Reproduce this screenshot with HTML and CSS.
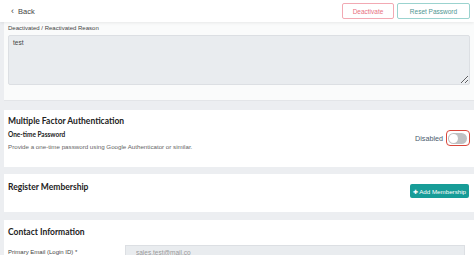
FILE: index.html
```html
<!DOCTYPE html>
<html lang="en">
<head>
  <meta charset="UTF-8">
  <title>Member Detail</title>
  <link rel="stylesheet" href="styles.css">
</head>
<body>

  <div class="topbar">
    <a class="back" href="#"><span class="chev">&#8249;</span> Back</a>
    <div class="actions">
      <button class="btn btn-deactivate">Deactivate</button>
      <button class="btn btn-reset">Reset Password</button>
    </div>
  </div>

  <div class="card card-reason">
    <label class="field-label">Deactivated / Reactivated Reason</label>
    <textarea class="reason" readonly>test</textarea>
  </div>

  <div class="card card-mfa">
    <h2 class="card-title">Multiple Factor Authentication</h2>
    <div class="mfa-row">
      <div>
        <div class="mfa-name">One-time Password</div>
        <div class="mfa-desc">Provide a one-time password using Google Authenticator or similar.</div>
      </div>
      <div class="mfa-status">
        <span class="status-text">Disabled</span>
        <span class="toggle"><span class="knob"></span></span>
      </div>
    </div>
  </div>

  <div class="card card-membership">
    <h2 class="card-title">Register Membership</h2>
    <button class="btn-add"><span class="plus">&#10010;</span> Add Membership</button>
  </div>

  <div class="card card-contact">
    <h2 class="card-title">Contact Information</h2>
    <div class="form-row">
      <label class="field-label">Primary Email (Login ID) *</label>
      <input class="email" type="text" value="sales.test@mail.co" readonly>
    </div>
  </div>

</body>
</html>
```

FILE: styles.css
```css
body {
  margin: 0;
  background: #eceef1;
  font-family: "Liberation Sans", Arial, sans-serif;
  color: #333;
  overflow: hidden;
}
.topbar {
  height: 22px;
  background: #fff;
  display: flex;
  align-items: center;
  justify-content: space-between;
  padding: 0 4px 0 11px;
  box-shadow: 0 1px 3px rgba(0, 0, 0, 0.08);
  position: relative;
}
.back {
  font-size: 7.5px;
  color: #444;
  text-decoration: none;
}
.chev {
  font-size: 9px;
  margin-right: 2px;
}
.actions {
  display: flex;
  gap: 3px;
}
.btn {
  height: 16px;
  font-family: "Liberation Sans", Arial, sans-serif;
  font-size: 6.5px;
  background: #fff;
  border-radius: 2px;
  padding: 0;
}
.btn-deactivate {
  width: 52px;
  border: 1px solid #f2a9b3;
  color: #e8707f;
}
.btn-reset {
  width: 73px;
  border: 1px solid #9bd3cf;
  color: #4f9692;
}
.card {
  background: #fff;
  margin-left: 4px;
  padding: 0 4px;
}
.card-reason {
  background: #fafbfb;
  padding-top: 3px;
  height: 75px;
  border-bottom: 1px solid #e3e5e8;
}
.field-label {
  display: block;
  font-size: 6px;
  color: #444;
}
.reason {
  display: block;
  box-sizing: border-box;
  width: 462px;
  height: 50px;
  margin-top: 4px;
  background: #e9ecef;
  border: 1px solid #dcdfe3;
  border-radius: 2px;
  font-family: "Liberation Sans", Arial, sans-serif;
  font-size: 6.5px;
  color: #444;
  padding: 3px 4px;
  resize: vertical;
}
.card-mfa {
  margin-top: 9px;
  height: 57px;
  padding-top: 6px;
  box-sizing: border-box;
}
.card-title {
  margin: 0;
  font-family: "Lato", sans-serif;
  font-weight: 700;
  font-size: 8.5px;
  color: #222;
}
.mfa-row {
  display: flex;
  justify-content: space-between;
  align-items: flex-end;
  margin-top: 4px;
}
.mfa-name {
  font-family: "Lato", sans-serif;
  font-weight: 700;
  font-size: 6.5px;
  color: #222;
}
.mfa-desc {
  margin-top: 5px;
  font-size: 6.2px;
  color: #666;
}
.mfa-status {
  display: flex;
  align-items: center;
  gap: 3px;
  margin-bottom: 4px;
}
.status-text {
  font-size: 7.2px;
  color: #4a5c6e;
}
.toggle {
  box-sizing: border-box;
  width: 24px;
  height: 16px;
  border: 1.5px solid #d9473c;
  border-radius: 4px;
  display: flex;
  align-items: center;
  padding: 0 1px;
}
.toggle .knob {
  width: 19px;
  height: 11px;
  border-radius: 6px;
  background: #bfc1c3;
  position: relative;
}
.toggle .knob::before {
  content: "";
  position: absolute;
  left: 1px;
  top: 1px;
  width: 9px;
  height: 9px;
  border-radius: 50%;
  background: #fff;
}
.card-membership {
  margin-top: 7px;
  height: 38px;
  display: flex;
  justify-content: space-between;
  align-items: flex-start;
  padding-top: 8px;
  box-sizing: border-box;
}
.btn-add {
  margin-right: 1px;
  margin-top: 2px;
  height: 14px;
  padding: 0 3px;
  background: #179c97;
  border: none;
  border-radius: 2px;
  color: #fff;
  font-family: "Liberation Sans", Arial, sans-serif;
  font-size: 6.2px;
}
.plus {
  font-size: 5.5px;
}
.card-contact {
  margin-top: 8px;
  padding-top: 7px;
  height: 60px;
  box-sizing: border-box;
}
.form-row {
  display: flex;
  align-items: center;
  margin-top: 8px;
}
.form-row .field-label {
  width: 117px;
}
.email {
  width: 340px;
  height: 14px;
  box-sizing: border-box;
  background: #e9ecef;
  border: 1px solid #dcdfe3;
  font-size: 6.5px;
  color: #999;
  padding: 0 10px;
}
```
